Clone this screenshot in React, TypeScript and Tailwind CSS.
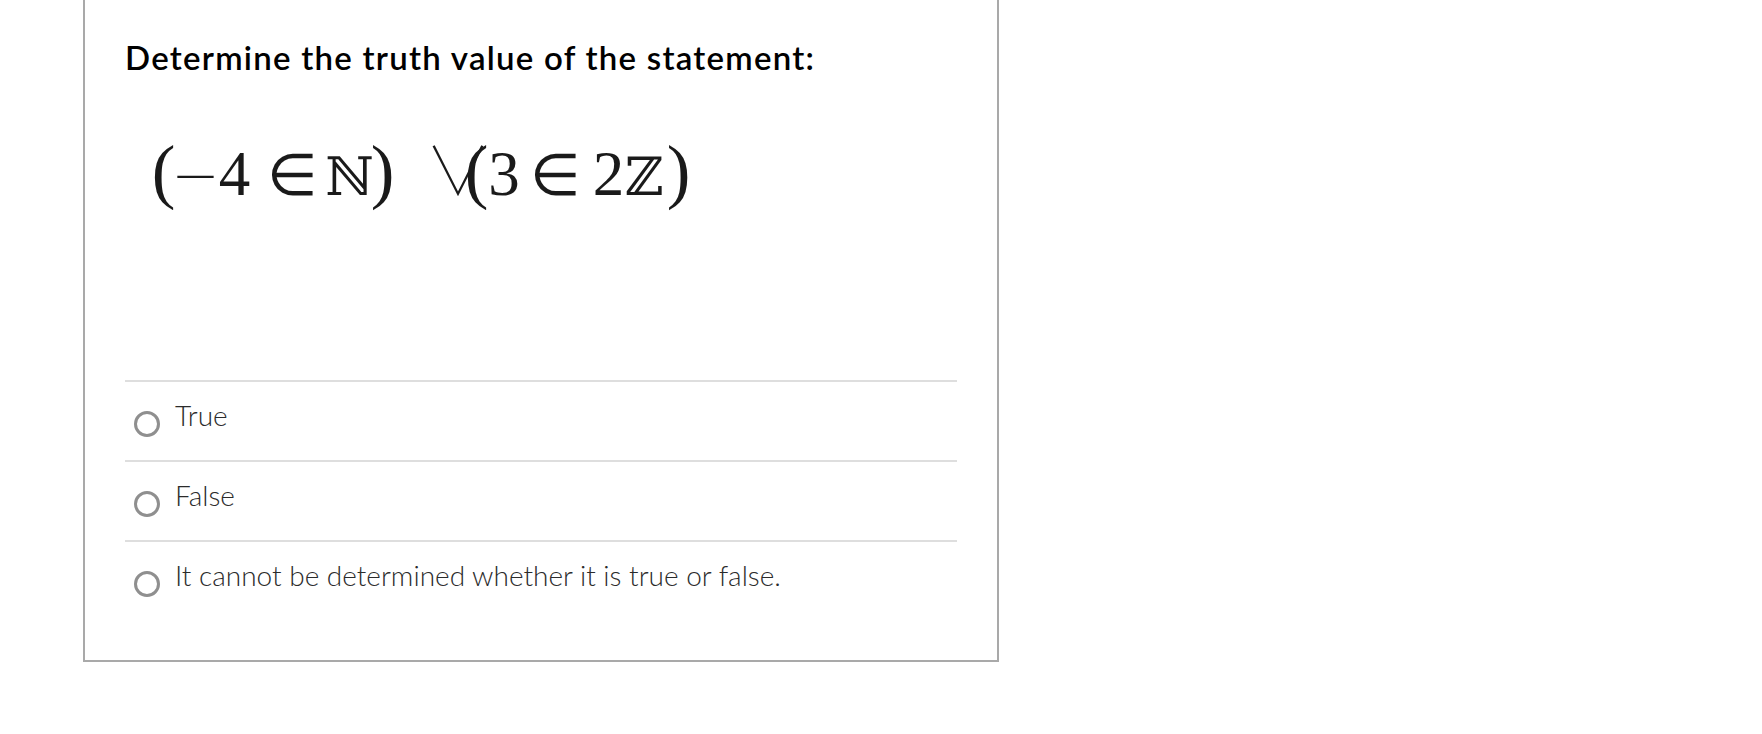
import React from 'react';

const options = [
  'True',
  'False',
  'It cannot be determined whether it is true or false.',
];

// (−4 ∈ ℕ) ∨ (3 ∈ 2ℤ), each glyph boxed to its ink width, gap to the previous one as margin
const serif = "font-['Liberation_Serif','DejaVu_Serif',serif] text-[63px]";
const paren = "font-['Liberation_Serif','DejaVu_Serif',serif] text-[71px]";
const rel = "font-['DejaVu_Sans',sans-serif] text-[58px] font-extralight";
const bb = "font-['Liberation_Serif','DejaVu_Serif',serif] text-[53px]";
const vee = "font-['Noto_Sans_CJK_JP',sans-serif] text-[66px] leading-[30px] font-thin";

const tokens = [
  { ch: '(', cls: `ml-[29px] w-[19px] ${paren}` },
  { ch: '−', cls: `ml-[3px] w-[39px] ${rel}` },
  { ch: '4', cls: `ml-[3px] w-[33px] ${serif}` },
  { ch: '∈', cls: `ml-[26px] w-[31px] ${rel}` },
  { ch: 'ℕ', cls: `ml-[22px] w-[39px] ${bb}` },
  { ch: ')', cls: `ml-[5px] w-[17px] ${paren}` },
  // the CJK glyph sits left in its em box, so its box is pushed right
  { ch: '∨', cls: `ml-[56px] w-[22px] ${vee}` },
  { ch: '(', cls: `-ml-[2px] w-[19px] ${paren}` },
  { ch: '3', cls: `ml-[4px] w-[28px] ${serif}` },
  { ch: '∈', cls: `ml-[22px] w-[30px] ${rel}` },
  { ch: '2', cls: `ml-[26px] w-[25px] ${serif}` },
  { ch: 'ℤ', cls: `ml-[3px] w-[40px] ${bb}` },
  { ch: ')', cls: `ml-[5px] w-[19px] ${paren}` },
];

const App = () => {
  return (
    <div className="min-h-screen w-full bg-white">
      {/* question card, its top edge runs off the page */}
      <div className="ml-[83px] w-[916px] border-2 border-t-0 border-[#a9a9a9] px-[40px] pb-[40px]">
        <h2 className="pt-[39px] font-['Lato','Liberation_Sans',sans-serif] text-[33px] leading-[36px] font-semibold tracking-[1.25px] text-black">
          Determine the truth value of the statement:
        </h2>

        {/* statement, set like TeX */}
        <div className="mt-[63px] mb-[176px] flex h-[66px] items-baseline leading-[66px] text-[#1a1a1a]">
          {tokens.map((t, i) => (
            <span key={i} className={`flex shrink-0 justify-center whitespace-nowrap ${t.cls}`}>
              {t.ch}
            </span>
          ))}
        </div>

        <div className="flex flex-col">
          {options.map((label) => (
            <label
              key={label}
              className="flex h-[80px] items-start border-t-2 border-[#dedede] pt-[16px]"
            >
              <span className="mt-[13px] ml-[9px] h-[26px] w-[26px] shrink-0 rounded-full border-[3px] border-[#8f8f8f] bg-white" />
              <span className="ml-[15px] font-['Lato','Liberation_Sans',sans-serif] text-[28px] leading-[34px] font-light text-[#2b2b2b]">
                {label}
              </span>
            </label>
          ))}
        </div>
      </div>
    </div>
  );
};

export default App;
